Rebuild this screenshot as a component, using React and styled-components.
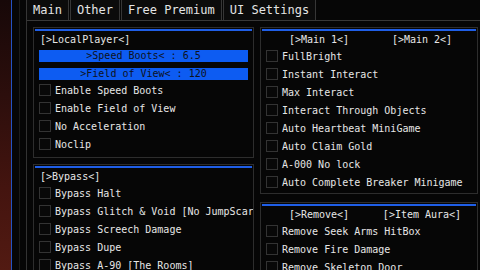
import React from 'react';
import styled, { createGlobalStyle } from 'styled-components';

const GlobalStyle = createGlobalStyle`
  html, body {
    margin: 0;
    padding: 0;
    width: 480px;
    height: 270px;
    overflow: hidden;
    background: #050505;
  }
  * { box-sizing: border-box; }
`;

const mono = `"DejaVu Sans Mono", "Liberation Mono", monospace`;

const Screen = styled.div`
  display: flex;
  width: 480px;
  height: 270px;
  overflow: hidden;
`;

const Backdrop = styled.div`
  width: 11px;
  flex: none;
  background: linear-gradient(180deg, #170808 0%, #2c0e0c 35%, #44140f 70%, #521a12 100%);
`;

const Window = styled.div`
  flex: 1;
  display: flex;
  border-left: 1px solid #2452c4;
  background: #060606;
  padding-left: 7px;
  min-width: 0;
`;

const Inner = styled.div`
  flex: 1;
  display: flex;
  border-left: 1px solid #1c1c1c;
  padding-left: 6px;
  min-width: 0;
`;

const Main = styled.div`
  flex: 1;
  display: flex;
  flex-direction: column;
  min-width: 0;
`;

const TabBar = styled.div`
  display: flex;
  gap: 1px;
  margin-top: -5px;
  height: 25px;
  flex: none;
`;

const Tab = styled.div`
  height: 25px;
  padding: 0 6px 3px;
  display: flex;
  align-items: flex-end;
  border: 1px solid #363636;
  border-bottom: none;
  background: #0b0b0b;
  color: #e4e4e4;
  font-family: ${mono};
  font-size: 12px;
  line-height: 14px;
  white-space: nowrap;
`;

const Frame = styled.div`
  flex: 1;
  border-top: 1px solid #383838;
  border-left: 1px solid #333;
  padding: 6px 0 0 6px;
  display: grid;
  grid-template-columns: 221px 218px;
  column-gap: 6px;
  align-items: start;
  overflow: hidden;
`;

const Column = styled.div`
  display: flex;
  flex-direction: column;
  gap: ${(p) => p.$gap}px;
`;

const Panel = styled.div`
  border: 1px solid #2d2d2d;
  padding: 0 5px ${(p) => p.$pb ?? 4}px;
  overflow: hidden;
  font-family: ${mono};
  font-size: 10px;
  color: #e6e6e6;
`;

const Accent = styled.div`
  height: 2px;
  margin: 1px -4px 0;
  background: #1f5ee6;
`;

const Header = styled.div`
  height: 16px;
  display: flex;
  align-items: center;
  padding-left: 1px;
  white-space: nowrap;
`;

const SplitHeader = styled.div`
  height: 16px;
  display: grid;
  grid-template-columns: 1fr 1fr;
  align-items: center;
  white-space: nowrap;
  span {
    text-align: center;
    padding-left: 3px;
  }
`;

const Sliders = styled.div`
  display: flex;
  flex-direction: column;
  gap: 6px;
  margin: 3px 0 1px;
`;

const Slider = styled.div`
  height: 12px;
  background: #0d5cf2;
  color: #0e1220;
  display: flex;
  align-items: center;
  justify-content: center;
  line-height: 12px;
  white-space: nowrap;
`;

const Row = styled.div`
  height: 18px;
  display: flex;
  align-items: center;
  gap: 4px;
  white-space: nowrap;
`;

const Box = styled.span`
  width: 12px;
  height: 12px;
  flex: none;
  border: 1px solid #333;
  background: #080808;
`;

function Check({ label }) {
  return (
    <Row>
      <Box />
      <span>{label}</span>
    </Row>
  );
}

const localPlayer = ['Enable Speed Boots', 'Enable Field of View', 'No Acceleration', 'Noclip'];
const bypass = [
  'Bypass Halt',
  'Bypass Glitch & Void [No JumpScare]',
  'Bypass Screech Damage',
  'Bypass Dupe',
  'Bypass A-90 [The Rooms]',
];
const mainOpts = [
  'FullBright',
  'Instant Interact',
  'Max Interact',
  'Interact Through Objects',
  'Auto Heartbeat MiniGame',
  'Auto Claim Gold',
  'A-000 No lock',
  'Auto Complete Breaker Minigame',
];
const removeOpts = ['Remove Seek Arms HitBox', 'Remove Fire Damage', 'Remove Skeleton Door'];

export default function App() {
  return (
    <>
      <GlobalStyle />
      <Screen>
        <Backdrop />
        <Window>
          <Inner>
            <Main>
              <TabBar>
                <Tab>Main</Tab>
                <Tab>Other</Tab>
                <Tab>Free Premium</Tab>
                <Tab>UI Settings</Tab>
              </TabBar>
              <Frame>
                <Column $gap={6}>
                  <Panel>
                    <Accent />
                    <Header>[&gt;LocalPlayer&lt;]</Header>
                    <Sliders>
                      <Slider>&gt;Speed Boots&lt; : 6.5</Slider>
                      <Slider>&gt;Field of View&lt; : 120</Slider>
                    </Sliders>
                    {localPlayer.map((l) => (
                      <Check key={l} label={l} />
                    ))}
                  </Panel>
                  <Panel>
                    <Accent />
                    <Header>[&gt;Bypass&lt;]</Header>
                    {bypass.map((l) => (
                      <Check key={l} label={l} />
                    ))}
                  </Panel>
                </Column>
                <Column $gap={8}>
                  <Panel $pb={2}>
                    <Accent />
                    <SplitHeader>
                      <span>[&gt;Main 1&lt;]</span>
                      <span>[&gt;Main 2&lt;]</span>
                    </SplitHeader>
                    {mainOpts.map((l) => (
                      <Check key={l} label={l} />
                    ))}
                  </Panel>
                  <Panel>
                    <Accent />
                    <SplitHeader>
                      <span>[&gt;Remove&lt;]</span>
                      <span>[&gt;Item Aura&lt;]</span>
                    </SplitHeader>
                    {removeOpts.map((l) => (
                      <Check key={l} label={l} />
                    ))}
                  </Panel>
                </Column>
              </Frame>
            </Main>
          </Inner>
        </Window>
      </Screen>
    </>
  );
}
